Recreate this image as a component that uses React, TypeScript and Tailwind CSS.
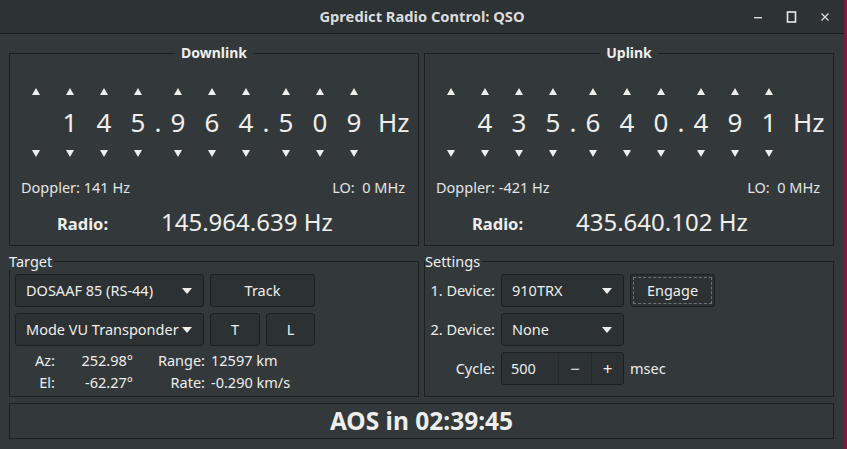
import React from 'react';

const UpArrow = () => (
  <svg width="8" height="7" viewBox="0 0 8 7">
    <polygon points="4,0 8,7 0,7" fill="#eeeeec" />
  </svg>
);

const DownArrow = () => (
  <svg width="8" height="7" viewBox="0 0 8 7">
    <polygon points="0,0 8,0 4,7" fill="#eeeeec" />
  </svg>
);

const ComboArrow = () => (
  <svg width="10" height="6" viewBox="0 0 10 6">
    <polygon points="0,0 10,0 5,6" fill="#eeeeec" />
  </svg>
);

const DigitCol = ({ d }: { d: string }) => (
  <div className="flex w-[34px] flex-col items-center">
    <div className="flex h-[10px] items-center">
      <UpArrow />
    </div>
    <div className="flex h-[52px] items-center text-[26px] leading-none">{d}</div>
    <div className="flex h-[10px] items-center">
      <DownArrow />
    </div>
  </div>
);

const Dot = () => (
  <div className="flex w-[6px] flex-col items-center pt-[10px]">
    <div className="flex h-[52px] items-center text-[26px] leading-none">.</div>
  </div>
);

type LinkProps = {
  title: string;
  digits: string[];
  doppler: string;
  radio: string;
};

const LinkFrame = ({ title, digits, doppler, radio }: LinkProps) => (
  <div className="relative h-[193px] w-[410px] border border-[#1c2022]">
    <div className="absolute left-0 right-0 top-[-10px] flex justify-center">
      <span className="bg-[#33393b] px-[6px] text-[14px] font-bold leading-[18px]">{title}</span>
    </div>
    <div className="flex pl-[9px] pt-[32px]">
      <DigitCol d={digits[0]} />
      <DigitCol d={digits[1]} />
      <DigitCol d={digits[2]} />
      <DigitCol d={digits[3]} />
      <Dot />
      <DigitCol d={digits[4]} />
      <DigitCol d={digits[5]} />
      <DigitCol d={digits[6]} />
      <Dot />
      <DigitCol d={digits[7]} />
      <DigitCol d={digits[8]} />
      <DigitCol d={digits[9]} />
      <div className="ml-[7px] flex h-[72px] items-center text-[26px] leading-none">Hz</div>
    </div>
    <div className="mt-[20px] flex h-[20px] items-center justify-between pl-[11px] pr-[13px] text-[14.5px] text-[#e4e4e2]">
      <span>Doppler: {doppler}</span>
      <span>LO:&nbsp; 0 MHz</span>
    </div>
    <div className="mt-[9px] flex h-[30px] items-center">
      <span className="ml-[47px] w-[104px] pt-[4px] text-[16.5px] font-bold">Radio:</span>
      <span className="text-[24px] leading-none">{radio}</span>
    </div>
  </div>
);

const Combo = ({ label, w }: { label: string; w: string }) => (
  <div
    className={`flex h-[33px] ${w} items-center justify-between rounded-[3px] border border-[#1c1f21] bg-[#2c3133] pl-[10px] pr-[11px] text-[14.5px]`}
  >
    <span className="whitespace-nowrap">{label}</span>
    <ComboArrow />
  </div>
);

const Btn = ({ label, w }: { label: string; w: string }) => (
  <div
    className={`flex h-[33px] ${w} items-center justify-center rounded-[3px] border border-[#1c1f21] bg-[#2c3133] text-[14.5px]`}
  >
    {label}
  </div>
);

const App = () => {
  return (
    <div className="flex h-[449px] w-[847px] overflow-hidden bg-[#33393b] font-['Noto_Sans','DejaVu_Sans',sans-serif] text-[#eeeeec]">
      <div className="flex w-[844px] flex-col">
        <div className="relative flex h-[34px] items-center justify-center border-b border-[#1a1d1e] bg-[#2d3234]">
          <span className="text-[14.7px] font-bold text-[#dcdcdc]">Gpredict Radio Control: QSO</span>
          <div className="absolute right-[14px] top-0 flex h-[33px] items-center gap-[23px] text-[#dcdcdc]">
            <svg width="10" height="10" viewBox="0 0 10 10">
              <rect x="1" y="5" width="8" height="1.4" fill="#dcdcdc" />
            </svg>
            <svg width="11" height="12" viewBox="0 0 11 12">
              <rect x="1.5" y="1" width="8" height="10" fill="none" stroke="#e8e8e8" strokeWidth="1.6" />
            </svg>
            <svg width="10" height="10" viewBox="0 0 10 10">
              <path d="M1.5 1.5 L8.5 8.5 M8.5 1.5 L1.5 8.5" stroke="#dcdcdc" strokeWidth="1.3" />
            </svg>
          </div>
        </div>
        <div className="flex flex-col pl-[9px] pt-[19px]">
          <div className="flex gap-[5px]">
            <LinkFrame
              title="Downlink"
              digits={['', '1', '4', '5', '9', '6', '4', '5', '0', '9']}
              doppler="141 Hz"
              radio="145.964.639 Hz"
            />
            <LinkFrame
              title="Uplink"
              digits={['', '4', '3', '5', '6', '4', '0', '4', '9', '1']}
              doppler="-421 Hz"
              radio="435.640.102 Hz"
            />
          </div>
          <div className="mt-[15px] flex gap-[5px]">
            <div className="relative h-[136px] w-[410px] border border-[#1c2022]">
              <span className="absolute left-[-1px] top-[-10px] bg-[#33393b] pr-[2px] text-[14.5px] leading-[18px]">Target</span>
              <div className="flex flex-col gap-[6px] pl-[5px] pt-[12px]">
                <div className="flex gap-[6px]">
                  <Combo label="DOSAAF 85 (RS-44)" w="w-[189px]" />
                  <Btn label="Track" w="w-[105px]" />
                </div>
                <div className="flex gap-[6px]">
                  <Combo label="Mode VU Transponder" w="w-[189px]" />
                  <Btn label="T" w="w-[50px]" />
                  <Btn label="L" w="w-[49px]" />
                </div>
              </div>
              <div className="mt-[3px] grid grid-cols-[45px_78px_72px_auto] text-[14.5px] leading-[22px]">
                <span className="text-right">Az:</span>
                <span className="text-right">252.98°</span>
                <span className="text-right">Range:</span>
                <span className="pl-[6px]">12597 km</span>
                <span className="text-right">El:</span>
                <span className="text-right">-62.27°</span>
                <span className="text-right">Rate:</span>
                <span className="pl-[6px]">-0.290 km/s</span>
              </div>
            </div>
            <div className="relative h-[136px] w-[410px] border border-[#1c2022]">
              <span className="absolute left-[0px] top-[-10px] bg-[#33393b] pr-[2px] text-[14.5px] leading-[18px]">Settings</span>
              <div className="flex flex-col gap-[6px] pt-[12px] text-[14.5px]">
                <div className="flex items-center">
                  <span className="w-[70px] whitespace-nowrap text-right">1. Device:</span>
                  <div className="ml-[6px]">
                    <Combo label="910TRX" w="w-[123px]" />
                  </div>
                  <div className="ml-[6px] flex h-[33px] w-[85px] items-center rounded-[3px] border border-[#1c1f21] bg-[#2c3133] p-[2px]">
                    <div className="flex h-full w-full items-center justify-center border border-dashed border-[#6e7375]">
                      Engage
                    </div>
                  </div>
                </div>
                <div className="flex items-center">
                  <span className="w-[70px] whitespace-nowrap text-right">2. Device:</span>
                  <div className="ml-[6px]">
                    <Combo label="None" w="w-[123px]" />
                  </div>
                </div>
                <div className="flex items-center">
                  <span className="w-[70px] text-right">Cycle:</span>
                  <div className="ml-[6px] flex h-[33px] w-[123px] items-stretch rounded-[3px] border border-[#1c1f21] bg-[#2c3133]">
                    <span className="flex w-[56px] items-center pl-[9px]">500</span>
                    <span className="flex w-[33px] items-center justify-center border-l border-[#25292b] text-[17px]">−</span>
                    <span className="flex flex-1 items-center justify-center border-l border-[#25292b] text-[17px]">+</span>
                  </div>
                  <span className="ml-[6px]">msec</span>
                </div>
              </div>
            </div>
          </div>
          <div className="mt-[6px] flex h-[36px] w-[825px] items-center justify-center border border-[#1c2022]">
            <span className="text-[24.5px] font-bold leading-none">AOS in 02:39:45</span>
          </div>
        </div>
      </div>
      <div className="w-[3px] bg-[#7a1c40]" />
    </div>
  );
};

export default App;
